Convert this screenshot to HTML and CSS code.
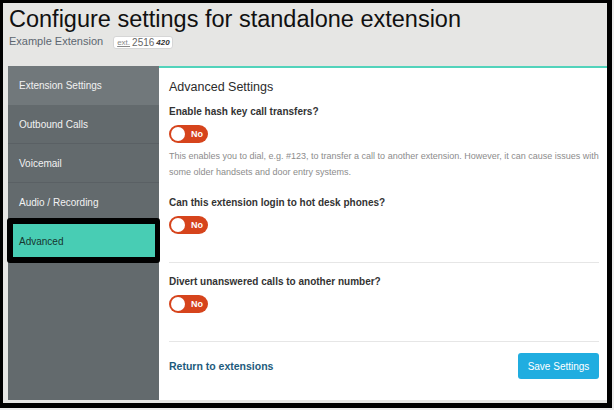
FILE: index.html
```html
<!DOCTYPE html>
<html lang="en">
<head>
<meta charset="utf-8">
<title>Configure settings for standalone extension</title>
<link rel="stylesheet" href="styles.css">
</head>
<body>
<div class="frame">
  <header class="page-header">
    <h1 class="title">Configure settings for standalone extension</h1>
    <div class="subtitle">
      <span class="ext-name">Example Extension</span>
      <span class="badge"><span class="badge-ext">ext.</span><span class="badge-num">2516</span><span class="badge-pin">420</span></span>
    </div>
  </header>
  <div class="panel">
    <nav class="sidebar">
      <div class="nav-item nav-top">Extension Settings</div>
      <div class="nav-item">Outbound Calls</div>
      <div class="nav-item">Voicemail</div>
      <div class="nav-item">Audio / Recording</div>
      <div class="nav-item nav-active">Advanced<span class="highlight"></span></div>
    </nav>
    <main class="content">
      <h2 class="heading">Advanced Settings</h2>
      <div class="field field-first">
        <div class="question">Enable hash key call transfers?</div>
        <div class="toggle"><span class="knob"></span><span class="toggle-label">No</span></div>
        <p class="help">This enables you to dial, e.g. #123, to transfer a call to another extension. However, it can cause issues with some older handsets and door entry systems.</p>
      </div>
      <div class="field field-second">
        <div class="question">Can this extension login to hot desk phones?</div>
        <div class="toggle"><span class="knob"></span><span class="toggle-label">No</span></div>
      </div>
      <div class="separator"></div>
      <div class="field field-third">
        <div class="question">Divert unanswered calls to another number?</div>
        <div class="toggle"><span class="knob"></span><span class="toggle-label">No</span></div>
      </div>
      <div class="separator"></div>
      <div class="footer">
        <a class="back-link">Return to extensions</a>
        <button class="save-btn">Save Settings</button>
      </div>
    </main>
  </div>
</div>
</body>
</html>
```

FILE: styles.css
```css
html, body {
  margin: 0;
  padding: 0;
}
body {
  width: 614px;
  height: 410px;
  background: #eeeeee;
  font-family: "Liberation Sans", Arial, sans-serif;
  overflow: hidden;
}
.frame {
  box-sizing: border-box;
  width: 612px;
  height: 408px;
  border-style: solid;
  border-color: #000;
  border-width: 3px 5px 5px 3px;
  background: #e6e6e4;
  display: flex;
  flex-direction: column;
}
.page-header {
  padding: 2px 0 0 6px;
}
.title {
  margin: 0;
  font-size: 23.5px;
  line-height: 28px;
  font-weight: normal;
  color: #111;
}
.subtitle {
  margin-top: 1px;
  height: 14px;
  display: flex;
  align-items: center;
  margin-bottom: 18px;
}
.ext-name {
  font-size: 11px;
  line-height: 14px;
  color: #5d6670;
}
.badge {
  margin-left: 10px;
  margin-top: 2px;
  box-sizing: border-box;
  height: 13px;
  padding: 0 2px 0 3px;
  background: #fff;
  border: 1px solid #d6d6d6;
  border-radius: 3px;
  display: flex;
  align-items: center;
  white-space: nowrap;
}
.badge-ext {
  font-size: 8px;
  color: #888;
  text-decoration: underline;
  margin-right: 2px;
}
.badge-num {
  font-size: 10px;
  color: #666;
  margin-right: 2px;
}
.badge-pin {
  font-size: 8px;
  font-weight: bold;
  font-style: italic;
  color: #333;
}
.panel {
  flex: 1;
  display: flex;
  margin: 0 0 3px 5px;
}
.sidebar {
  width: 151px;
  flex: none;
  background: #636a6d;
}
.nav-item {
  position: relative;
  height: 38px;
  border-bottom: 1px solid #5a6064;
  padding-left: 11px;
  display: flex;
  align-items: center;
  font-size: 10px;
  color: #f2f2f2;
}
.nav-top {
  background: #71787b;
  border-bottom-color: #71787b;
}
.nav-active {
  background: #48cdb4;
  color: #17352f;
  border-bottom-color: #48cdb4;
}
.highlight {
  position: absolute;
  left: -1px;
  right: -1px;
  top: -4px;
  bottom: -3px;
  border-style: solid;
  border-color: #000;
  border-width: 6px 5px 6px 6px;
  border-radius: 3px;
}
.content {
  flex: 1;
  background: #fff;
  border-top: 2px solid #52d3bb;
  padding: 11px 8px 0 10px;
  color: #333;
}
.heading {
  margin: 0;
  font-size: 12.5px;
  line-height: 16px;
  font-weight: normal;
  color: #2b2b2b;
}
.field-first {
  margin-top: 10px;
}
.field-second {
  margin-top: 16px;
}
.field-third {
  margin-top: 12px;
}
.question {
  font-size: 10px;
  line-height: 14px;
  font-weight: bold;
  color: #333;
}
.toggle {
  margin-top: 6px;
  box-sizing: border-box;
  width: 39px;
  height: 18px;
  border-radius: 9px;
  background: #d6441c;
  padding: 2px;
  display: flex;
  align-items: center;
  gap: 6px;
}
.knob {
  width: 14px;
  height: 14px;
  border-radius: 50%;
  background: #fff;
  flex: none;
}
.toggle-label {
  font-size: 9px;
  font-weight: bold;
  color: #fff;
}
.help {
  margin: 5px 0 0;
  font-size: 9px;
  line-height: 16px;
  color: #8c8c8c;
}
.separator {
  margin-top: 28px;
  border-top: 1px solid #e6e6e6;
}
.footer {
  padding-top: 11px;
  display: flex;
  justify-content: space-between;
  align-items: center;
}
.back-link {
  font-size: 10.5px;
  font-weight: bold;
  color: #1d5b7c;
}
.save-btn {
  width: 81px;
  height: 26px;
  border: none;
  border-radius: 3px;
  background: #20ade0;
  color: #fff;
  font-family: "Liberation Sans", Arial, sans-serif;
  font-size: 10px;
  padding: 0;
}
```
